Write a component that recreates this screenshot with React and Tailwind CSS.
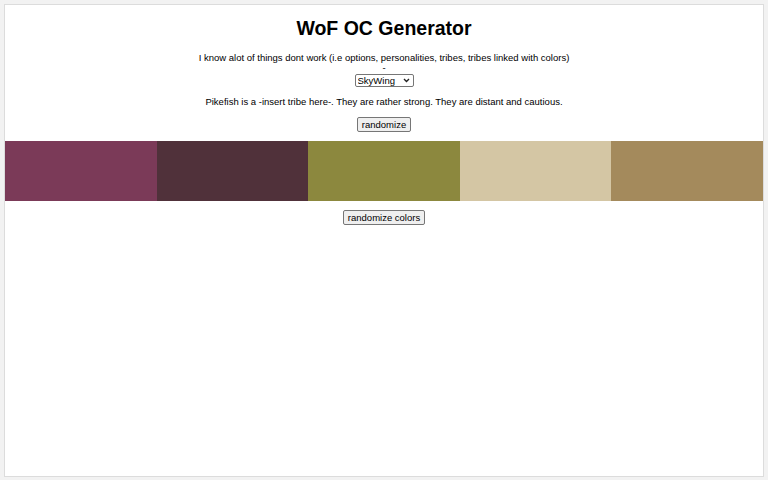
import React from "react";

const swatches = ["#7b3a58", "#50313a", "#8c883e", "#d4c6a4", "#a48a5c"];

function Chevron() {
  return (
    <svg className="pointer-events-none absolute right-[4px] top-[4px]" width="7" height="5" viewBox="0 0 7 5">
      <path d="M1 1 L3.5 3.5 L6 1" fill="none" stroke="#222" strokeWidth="1.4" />
    </svg>
  );
}

export default function App() {
  return (
    <div className="w-[768px] h-[480px] bg-[#f2f2f2] p-[4px]" style={{ fontFamily: '"Liberation Sans", Arial, sans-serif' }}>
      <div className="h-[473px] bg-white border border-[#dcdcdc] flex flex-col items-center text-black">
        <h1 className="mt-[11px] text-[19.5px] leading-[24px] font-bold">WoF OC Generator</h1>
        <p className="mt-[12px] text-[9.5px] leading-[12px]">
          I know alot of things dont work (i.e options, personalities, tribes, tribes linked with colors)
        </p>
        <p className="text-[9.5px] leading-[8px] h-[8px]">-</p>
        <div className="relative mt-[2px]">
          <select
            className="block appearance-none h-[13px] w-[59px] text-[9.5px] leading-[11px] border border-[#767676] rounded-[2px] pl-[2px] pr-[12px] py-0 bg-white"
            defaultValue="SkyWing"
          >
            <option>SkyWing</option>
            <option>SeaWing</option>
            <option>MudWing</option>
          </select>
          <Chevron />
        </div>
        <p className="mt-[9px] text-[9.5px] leading-[12px]">
          Pikefish is a -insert tribe here-. They are rather strong. They are distant and cautious.
        </p>
        <button className="mt-[9px] h-[15px] px-[4px] text-[9.5px] leading-[11px] bg-[#efefef] border border-[#767676] rounded-[2px]">
          randomize
        </button>
        <div className="mt-[9px] w-full flex h-[60px]">
          {swatches.map((c) => (
            <div key={c} className="flex-1" style={{ backgroundColor: c }} />
          ))}
        </div>
        <button className="mt-[9px] h-[15px] px-[4px] text-[9.5px] leading-[11px] bg-[#efefef] border border-[#767676] rounded-[2px]">
          randomize colors
        </button>
      </div>
    </div>
  );
}
